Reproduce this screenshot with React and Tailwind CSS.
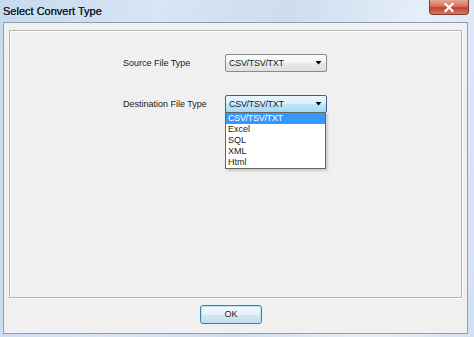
import React from "react";

const font = { fontFamily: '"Liberation Sans", Arial, sans-serif' };

function Arrow() {
  return (
    <svg width="7" height="4" viewBox="0 0 7 4" className="block">
      <path d="M0.5 0 H6.5 L3.5 3.5 Z" fill="#000" />
    </svg>
  );
}

export default function App() {
  return (
    <div
      className="w-[474px] h-[337px] overflow-hidden flex flex-col bg-[linear-gradient(100deg,#c8daee_0%,#d7e5f4_30%,#cdddef_55%,#e6eff9_80%,#d2e1f1_100%)] text-[#1a1a1a]"
      style={font}
    >
      {/* Title bar */}
      <div className="h-[22px] shrink-0 flex items-start justify-between">
        <div className="pl-[3px] pt-[4px] text-[11px] leading-[14px] text-[#15202c] [text-shadow:0_0_0.4px_#15202c]">
          Select Convert Type
        </div>
        <div className="mr-[5px] w-[40px] h-[15px] rounded-b-[4px] border border-t-0 border-[#7a3a33] bg-[linear-gradient(180deg,#e8a698_0%,#d6705e_45%,#c2432d_55%,#d9765f_100%)] flex items-center justify-center">
          <svg width="10" height="9" viewBox="0 0 10 9">
            <path d="M1.5 1 L8.5 8 M8.5 1 L1.5 8" stroke="#fff" strokeWidth="2.2" strokeLinecap="square" />
          </svg>
        </div>
      </div>

      {/* Client area */}
      <div className="ml-[3px] mr-[6px] h-[312px] shrink-0 border border-[#8e9fb3] bg-[#f0f0f0] flex flex-col">
        {/* Group box */}
        <div className="mx-[5px] mt-[7px] h-[268px] border border-[#b4b4b4] shadow-[inset_1px_1px_0_#ffffff,1px_1px_0_#ffffff] relative">
          <div className="pt-[23px] pl-[113px] flex flex-col gap-[23px]">
            <div className="flex items-center">
              <div className="w-[102px] text-[9px] leading-[11px] pt-[1px]">Source File Type</div>
              <div className="w-[102px] h-[18px] rounded-[2px] border border-[#8a8a8a] bg-[linear-gradient(180deg,#fbfbfb_0%,#f3f3f3_50%,#e8e8e8_51%,#e0e0e0_100%)] flex items-center justify-between pl-[3px] pr-[4px]">
                <span className="text-[9px] leading-[11px] tracking-[-0.3px]">CSV/TSV/TXT</span>
                <Arrow />
              </div>
            </div>
            <div className="flex items-center relative">
              <div className="w-[102px] text-[9px] leading-[11px] pt-[1px]">Destination File Type</div>
              <div className="w-[102px] h-[18px] rounded-[2px] border border-[#3c5f87] bg-[linear-gradient(180deg,#eaf6fd_0%,#d9f0fc_50%,#bee6fd_51%,#a7d9f5_100%)] flex items-center justify-between pl-[3px] pr-[4px]">
                <span className="text-[9px] leading-[11px] tracking-[-0.3px]">CSV/TSV/TXT</span>
                <Arrow />
              </div>
              {/* Dropdown list */}
              <div className="absolute left-[102px] top-[17px] w-[101px] border border-[#646464] bg-white flex flex-col text-[9px] leading-[11px] shadow-[2px_2px_2px_rgba(0,0,0,0.15)] z-10">
                <div className="h-[11px] bg-[#3399ff] text-white pl-[2px] tracking-[-0.3px]">CSV/TSV/TXT</div>
                <div className="h-[11px] pl-[2px]">Excel</div>
                <div className="h-[11px] pl-[2px]">SQL</div>
                <div className="h-[11px] pl-[2px]">XML</div>
                <div className="h-[11px] pl-[2px]">Html</div>
              </div>
            </div>
          </div>
        </div>

        {/* Button row */}
        <div className="pt-[7px] pl-[196px]">
          <div className="w-[62px] h-[19px] rounded-[3px] border border-[#3c7fb1] shadow-[inset_0_0_0_1px_#b9e3f6] bg-[linear-gradient(180deg,#f2f8fc_0%,#e6f1f9_50%,#d2e6f4_51%,#c4def0_100%)] flex items-center justify-center text-[9px] leading-[11px]">
            OK
          </div>
        </div>
      </div>
    </div>
  );
}
